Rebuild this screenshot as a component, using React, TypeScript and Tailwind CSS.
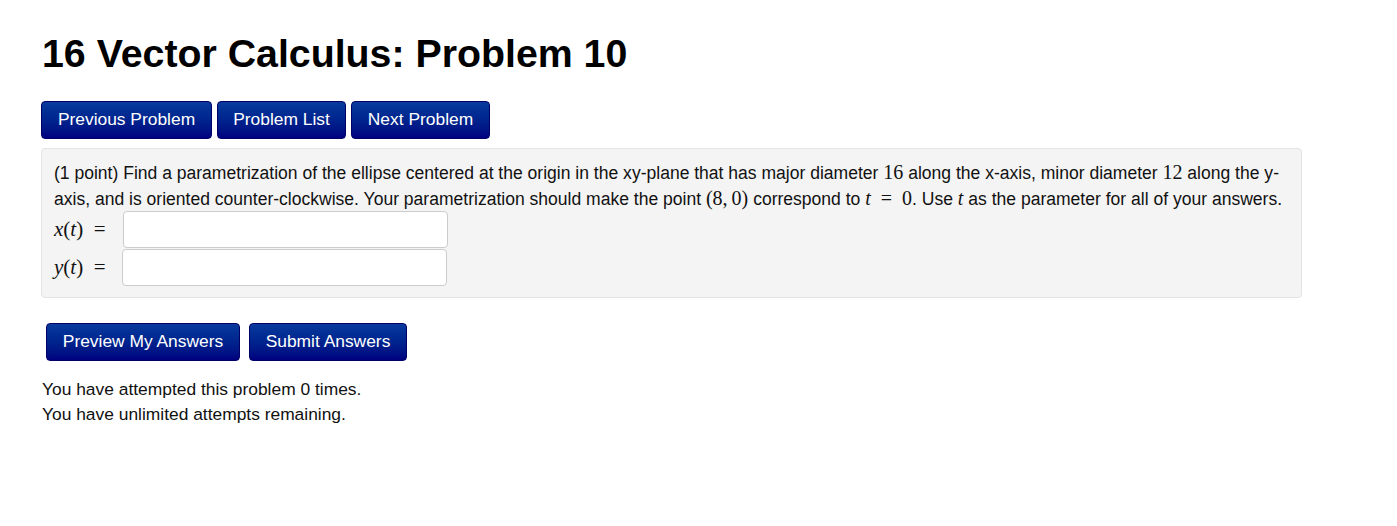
import React from "react";

const btn =
  "h-[38px] rounded-[4px] text-white text-[17.4px] bg-gradient-to-b from-[#0a3a9c] to-[#00007f] border border-[#000066] leading-none flex items-center justify-center";

const M = ({ children }: { children: React.ReactNode }) => (
  <span className="font-['Liberation_Serif',serif] text-[20px]">{children}</span>
);
const I = ({ children }: { children: React.ReactNode }) => <i>{children}</i>;

export default function App() {
  return (
    <div className="bg-white w-[1397px] h-[526px] font-['Liberation_Sans',Arial,sans-serif] text-[#111] pl-[41px] pt-[30px]">
      <h1 className="text-[39.3px] font-bold leading-[46px] text-black ml-[1px]">16 Vector Calculus: Problem 10</h1>
      <div className="flex gap-[5px] mt-[25px]">
        <button className={`${btn} w-[171px]`}>Previous Problem</button>
        <button className={`${btn} w-[129px]`}>Problem List</button>
        <button className={`${btn} w-[139px]`}>Next Problem</button>
      </div>
      <div className="mt-[9px] w-[1261px] h-[150px] bg-[#f4f4f4] border border-[#e3e3e3] rounded-[4px] px-[12px] pt-[11px] text-[17.55px] leading-[25px]">
        <div className="whitespace-nowrap">
          (1 point) Find a parametrization of the ellipse centered at the origin in the xy-plane that has major diameter <M>16</M> along the x-axis, minor diameter <M>12</M> along the y-
          <br />
          axis, and is oriented counter-clockwise. Your parametrization should make the point <M>(8,&thinsp;0)</M> correspond to <M><I>t</I>&ensp;=&ensp;0</M>. Use <M><I>t</I></M> as the parameter for all of your answers.
        </div>
        <div className="flex flex-col gap-[1px] -mt-[1px]">
          <div className="flex items-center">
            <span className="w-[69px] font-['Liberation_Serif',serif] text-[21px]"><i>x</i>(<i>t</i>)&ensp;=</span>
            <div className="w-[325px] h-[37px] bg-white border border-[#cccccc] rounded-[4px]" />
          </div>
          <div className="flex items-center">
            <span className="w-[68px] font-['Liberation_Serif',serif] text-[21px]"><i>y</i>(<i>t</i>)&ensp;=</span>
            <div className="w-[325px] h-[37px] bg-white border border-[#cccccc] rounded-[4px]" />
          </div>
        </div>
      </div>
      <div className="flex gap-[9px] mt-[25px] ml-[5px]">
        <button className={`${btn} w-[194px]`}>Preview My Answers</button>
        <button className={`${btn} w-[158px]`}>Submit Answers</button>
      </div>
      <div className="mt-[16px] text-[17.4px] leading-[25px] ml-[1px]">
        <div>You have attempted this problem 0 times.</div>
        <div>You have unlimited attempts remaining.</div>
      </div>
    </div>
  );
}
